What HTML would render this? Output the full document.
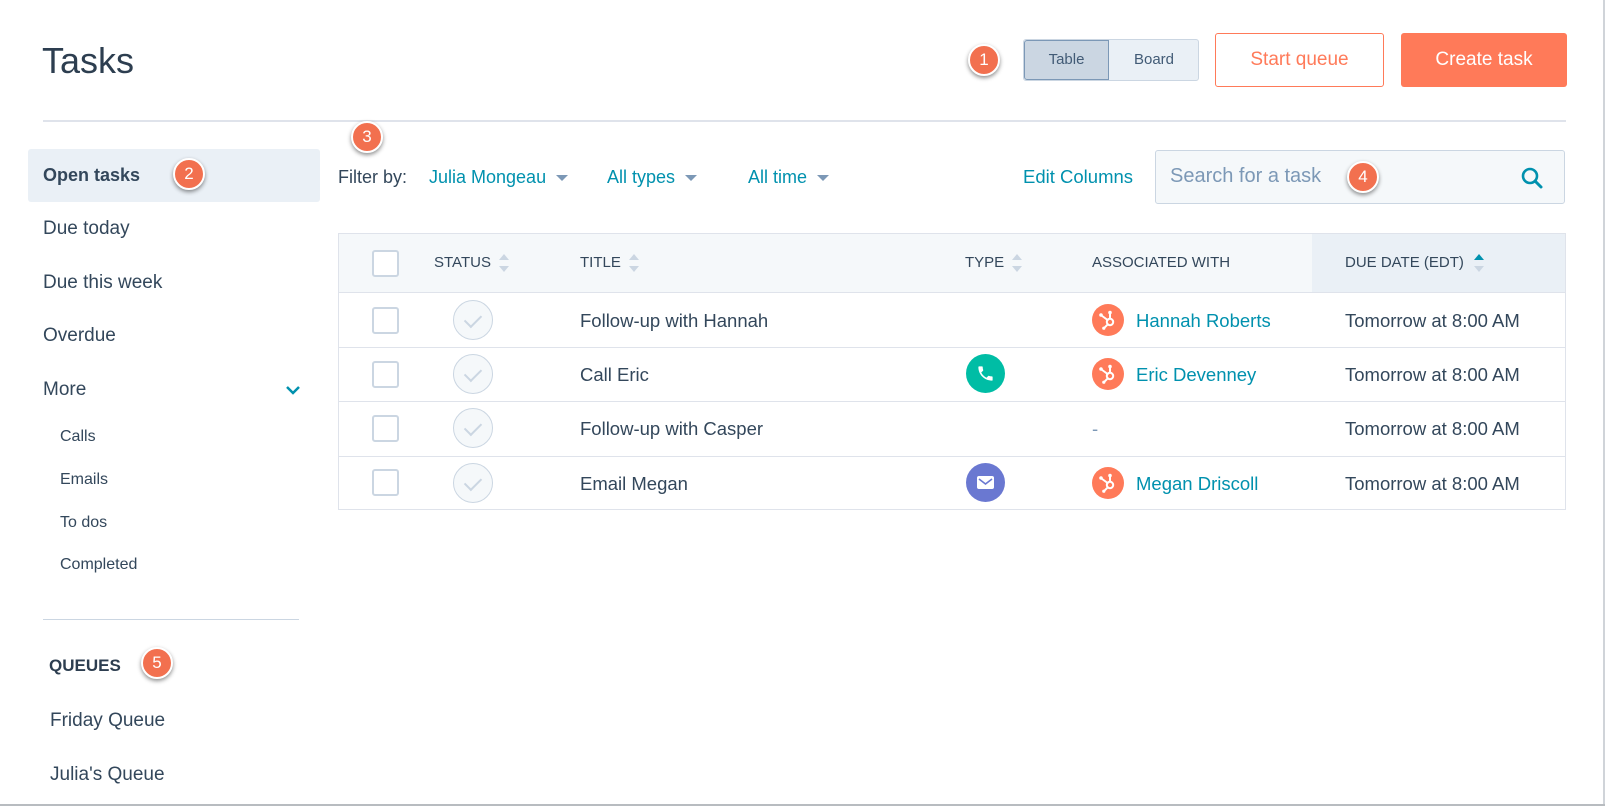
<!DOCTYPE html>
<html><head><meta charset="utf-8"><style>
*{box-sizing:border-box;margin:0;padding:0}
body{width:1605px;height:806px;position:relative;background:#fff;font-family:"Liberation Sans",sans-serif;color:#33475b;overflow:hidden}
.a{position:absolute;white-space:nowrap}
.badge{position:absolute;width:32px;height:32px;border-radius:50%;background:#f2704f;border:2px solid #fff;box-shadow:0 2px 4px rgba(0,0,0,.45);color:#fff;font-size:17px;text-align:center;line-height:28px}
.nav{position:absolute;left:43px;font-size:19px}
.sub{position:absolute;left:60px;font-size:16px}
.link{color:#0091ae}
.caret{display:inline-block;width:0;height:0;border-left:6px solid transparent;border-right:6px solid transparent;border-top:6px solid #7c98b6;margin-left:10px;vertical-align:middle}
.th{position:absolute;top:254px;font-size:15px;color:#33475b}
.sort{display:inline-block;vertical-align:middle;margin-left:8px;width:10px;height:18px;position:relative}
.sort:before{content:"";position:absolute;top:0;left:0;border-left:5px solid transparent;border-right:5px solid transparent;border-bottom:6px solid #cbd6e2}
.sort:after{content:"";position:absolute;bottom:0;left:0;border-left:5px solid transparent;border-right:5px solid transparent;border-top:6px solid #cbd6e2}
.sort.up:before{border-bottom-color:#0091ae}
.cb{position:absolute;left:372px;width:27px;height:27px;border:2px solid #cbd6e2;border-radius:3px;background:#fff}
.st{position:absolute;left:453px;width:40px;height:40px;border-radius:50%;border:1px solid #cbd6e2;background:#f5f8fa}
.st:after{content:"";position:absolute;left:14px;top:10px;width:8px;height:14px;border-right:2px solid #cbd6e2;border-bottom:2px solid #cbd6e2;transform:rotate(45deg)}
.td{position:absolute;font-size:18.5px}
.hs{position:absolute;left:1092px;width:32px;height:32px}
.row{position:absolute;left:338px;width:1228px;height:1px;background:#dfe3eb}
.f{font-size:18px}
</style></head><body>
<svg width="0" height="0" style="position:absolute"><defs><symbol id="hs" viewBox="0 0 32 32"><circle cx="16" cy="16" r="16" fill="#ff7a59"/><g fill="none" stroke="#fff" stroke-width="2" stroke-linecap="round"><circle cx="18" cy="18" r="3.2"/><path d="M18 14.8V9M15.6 16L9.5 11.5M15.8 20.3l-3.6 3.6"/></g><g fill="#fff"><circle cx="18" cy="8.5" r="1.8"/><circle cx="9" cy="11" r="1.8"/><circle cx="11.8" cy="24.2" r="1.6"/></g></symbol></defs></svg>
<div style="position:absolute;right:0;top:0;width:2px;height:806px;background:#d0d4d9"></div>
<div style="position:absolute;left:0;bottom:0;width:1605px;height:2px;background:#b8bcc0"></div>

<div class="a" style="left:42px;top:40px;font-size:36px;color:#2d3e50">Tasks</div>
<div class="badge" style="left:968px;top:44px">1</div>
<div class="a" style="left:1023px;top:39px;width:176px;height:42px;border:1px solid #cbd6e2;border-radius:3px;background:#eaf0f6;font-size:15px">
 <div class="a" style="left:0;top:0;width:85px;height:40px;background:#cbd6e2;border:1px solid #7c98b6;border-radius:3px 0 0 3px;text-align:center;line-height:38px;color:#425b76">Table</div>
 <div class="a" style="left:85px;top:0;width:90px;height:40px;text-align:center;line-height:40px;color:#425b76">Board</div>
</div>
<div class="a" style="left:1215px;top:33px;width:169px;height:54px;border:1px solid #ff7a59;border-radius:3px;color:#ff7a59;font-size:19px;text-align:center;line-height:52px">Start queue</div>
<div class="a" style="left:1401px;top:33px;width:166px;height:54px;background:#ff7a59;border-radius:3px;color:#fff;font-size:19px;text-align:center;line-height:54px">Create task</div>
<div class="a" style="left:43px;top:120px;width:1523px;height:2px;background:#dfe3eb"></div>

<div class="a" style="left:28px;top:149px;width:292px;height:53px;background:#eaf0f6;border-radius:3px"></div>
<div class="nav" style="top:165px;font-weight:bold;font-size:18px">Open tasks</div>
<div class="badge" style="left:173px;top:158px">2</div>
<div class="badge" style="left:351px;top:121px">3</div>
<div class="nav" style="top:218px">Due today</div>
<div class="nav" style="top:272px">Due this week</div>
<div class="nav" style="top:325px">Overdue</div>
<div class="nav" style="top:379px">More</div>
<svg class="a" style="left:285px;top:384px" width="16" height="12" viewBox="0 0 16 12"><path d="M2 3l6 6 6-6" fill="none" stroke="#0091ae" stroke-width="2.5"/></svg>
<div class="sub" style="top:428px">Calls</div>
<div class="sub" style="top:471px">Emails</div>
<div class="sub" style="top:514px">To dos</div>
<div class="sub" style="top:556px">Completed</div>
<div class="a" style="left:43px;top:619px;width:256px;height:1px;background:#cbd6e2"></div>
<div class="a" style="left:49px;top:656px;font-size:17px;font-weight:bold;color:#2d3e50">QUEUES</div>
<div class="badge" style="left:141px;top:647px">5</div>
<div class="a" style="left:50px;top:710px;font-size:19px">Friday Queue</div>
<div class="a" style="left:50px;top:764px;font-size:19px">Julia's Queue</div>

<div class="a f" style="left:338px;top:167px">Filter by:</div>
<div class="a link f" style="left:429px;top:167px">Julia Mongeau<span class="caret"></span></div>
<div class="a link f" style="left:607px;top:167px">All types<span class="caret"></span></div>
<div class="a link f" style="left:748px;top:167px">All time<span class="caret"></span></div>
<div class="a link" style="left:1023px;top:166px;font-size:18.5px">Edit Columns</div>
<div class="a" style="left:1155px;top:150px;width:410px;height:54px;border:1px solid #cbd6e2;border-radius:3px;background:#f5f8fa"></div>
<div class="a" style="left:1170px;top:165px;font-size:20px;color:#7c98b6">Search for a task</div>
<div class="badge" style="left:1347px;top:161px">4</div>
<svg class="a" style="left:1520px;top:166px" width="24" height="24" viewBox="0 0 24 24"><circle cx="10" cy="10" r="7" fill="none" stroke="#0091ae" stroke-width="2.6"/><path d="M15 15l6 6" stroke="#0091ae" stroke-width="3" stroke-linecap="round"/></svg>

<div class="a" style="left:338px;top:233px;width:1228px;height:277px;border:1px solid #dfe3eb"></div>
<div class="a" style="left:339px;top:234px;width:1226px;height:59px;background:#f5f8fa;border-bottom:1px solid #dfe3eb"></div>
<div class="a" style="left:1312px;top:234px;width:253px;height:59px;background:#eaf0f6;border-bottom:1px solid #dfe3eb"></div>
<div class="cb" style="top:250px"></div>
<div class="th" style="left:434px">STATUS<span class="sort"></span></div>
<div class="th" style="left:580px">TITLE<span class="sort"></span></div>
<div class="th" style="left:965px">TYPE<span class="sort"></span></div>
<div class="th" style="left:1092px">ASSOCIATED WITH</div>
<div class="th" style="left:1345px">DUE DATE (EDT)<span class="sort up" style="margin-left:10px"></span></div>

<div class="row" style="top:347px"></div>
<div class="row" style="top:401px"></div>
<div class="row" style="top:456px"></div>

<div class="cb" style="top:307px"></div><div class="st" style="top:300px"></div>
<div class="td" style="left:580px;top:310px">Follow-up with Hannah</div>
<svg class="hs" style="top:304px"><use href="#hs"/></svg><div class="td link" style="left:1136px;top:310px">Hannah Roberts</div>
<div class="td" style="left:1345px;top:310px">Tomorrow at 8:00 AM</div>

<div class="cb" style="top:361px"></div><div class="st" style="top:354px"></div>
<div class="td" style="left:580px;top:364px">Call Eric</div>
<div class="a" style="left:966px;top:354px;width:39px;height:39px;border-radius:50%;background:#00bda5"></div>
<svg class="a" style="left:976px;top:364px" width="19" height="19" viewBox="0 0 24 24"><path d="M6.6 10.8c1.4 2.8 3.8 5.1 6.6 6.6l2.2-2.2c.3-.3.7-.4 1-.2 1.1.4 2.3.6 3.6.6.6 0 1 .4 1 1V20c0 .6-.4 1-1 1C10.6 21 3 13.4 3 4c0-.6.4-1 1-1h3.5c.6 0 1 .4 1 1 0 1.3.2 2.5.6 3.6.1.3 0 .7-.2 1L6.6 10.8z" fill="#fff"/></svg>
<svg class="hs" style="top:358px"><use href="#hs"/></svg><div class="td link" style="left:1136px;top:364px">Eric Devenney</div>
<div class="td" style="left:1345px;top:364px">Tomorrow at 8:00 AM</div>

<div class="cb" style="top:415px"></div><div class="st" style="top:408px"></div>
<div class="td" style="left:580px;top:418px">Follow-up with Casper</div>
<div class="td" style="left:1092px;top:418px;color:#7c98b6">-</div>
<div class="td" style="left:1345px;top:418px">Tomorrow at 8:00 AM</div>

<div class="cb" style="top:469px"></div><div class="st" style="top:463px"></div>
<div class="td" style="left:580px;top:473px">Email Megan</div>
<div class="a" style="left:966px;top:463px;width:39px;height:39px;border-radius:50%;background:#6a78d1"></div>
<svg class="a" style="left:976px;top:475px" width="19" height="15" viewBox="0 0 19 15"><rect x="1" y="1" width="17" height="13" rx="2" fill="#fff"/><path d="M3 4l6.5 5L16 4" fill="none" stroke="#6a78d1" stroke-width="1.6"/></svg>
<svg class="hs" style="top:467px"><use href="#hs"/></svg><div class="td link" style="left:1136px;top:473px">Megan Driscoll</div>
<div class="td" style="left:1345px;top:473px">Tomorrow at 8:00 AM</div>
</body></html>
